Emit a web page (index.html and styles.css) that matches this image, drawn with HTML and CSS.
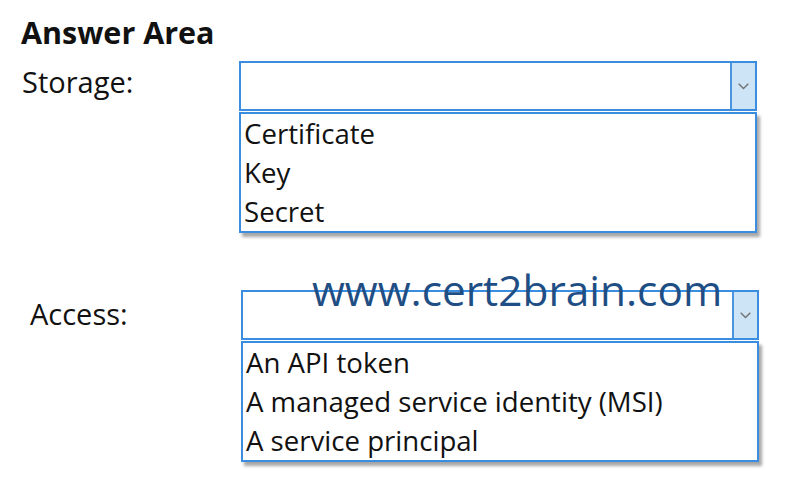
FILE: index.html
```html
<!DOCTYPE html>
<html>
<head>
<meta charset="utf-8">
<link rel="stylesheet" href="styles.css">
</head>
<body>
<div class="page">
  <h1 class="title">Answer Area</h1>
  <div class="question q-storage">
    <div class="label">Storage:</div>
    <div class="select">
      <div class="field">
        <div class="btn">
          <svg width="11" height="7" viewBox="0 0 11 7"><polyline points="0.7,0.7 5.5,5.5 10.3,0.7" fill="none" stroke="#6f6f6f" stroke-width="1.3"/></svg>
        </div>
      </div>
      <ul class="list">
        <li>Certificate</li>
        <li>Key</li>
        <li>Secret</li>
      </ul>
    </div>
  </div>
  <div class="question q-access">
    <div class="label">Access:</div>
    <div class="select">
      <div class="field">
        <div class="btn">
          <svg width="11" height="7" viewBox="0 0 11 7"><polyline points="0.7,0.7 5.5,5.5 10.3,0.7" fill="none" stroke="#6f6f6f" stroke-width="1.3"/></svg>
        </div>
      </div>
      <ul class="list">
        <li>An API token</li>
        <li>A managed service identity (MSI)</li>
        <li>A service principal</li>
      </ul>
    </div>
  </div>
  <div class="watermark">www.cert2brain.com</div>
</div>
</body>
</html>
```

FILE: styles.css
```css
html, body {
  margin: 0;
  padding: 0;
  background: #ffffff;
}
body {
  font-family: "Open Sans", "Lato", sans-serif;
  color: #111111;
}
.page {
  position: relative;
  width: 786px;
  height: 489px;
  padding: 14px 0 0 21px;
  box-sizing: border-box;
}
.title {
  margin: 0;
  font-size: 30.5px;
  font-weight: 700;
  line-height: 36px;
  height: 47px;
}
.question {
  display: grid;
  align-items: start;
}
.q-storage {
  grid-template-columns: 217px 518px;
  padding-left: 1px;
}
.q-storage .label {
  padding-top: 5px;
}
.q-access {
  margin-top: 57px;
  grid-template-columns: 211px 518px;
  padding-left: 9px;
}
.q-access .label {
  padding-top: 8px;
}
.label {
  font-size: 29px;
  line-height: 32px;
}
.select {
  display: flex;
  flex-direction: column;
  gap: 1px;
}
.field {
  height: 50px;
  box-sizing: border-box;
  border: 2px solid #3b8edf;
  display: flex;
  justify-content: flex-end;
  background: #fff;
}
.btn {
  width: 23px;
  background: #cde4f7;
  border-left: 2px solid #4a95de;
  display: flex;
  align-items: center;
  justify-content: center;
}
.list {
  list-style: none;
  margin: 0;
  padding: 0 0 0 3px;
  border: 2px solid #3b8edf;
  box-shadow: 3px 4px 3px rgba(0, 0, 0, 0.35);
  background: #fff;
}
.list li {
  font-size: 27.6px;
  line-height: 39px;
  white-space: nowrap;
}
.watermark {
  position: absolute;
  left: 312px;
  top: 265px;
  font-size: 42.4px;
  line-height: 50px;
  color: #1f4e84;
  white-space: nowrap;
}
```
